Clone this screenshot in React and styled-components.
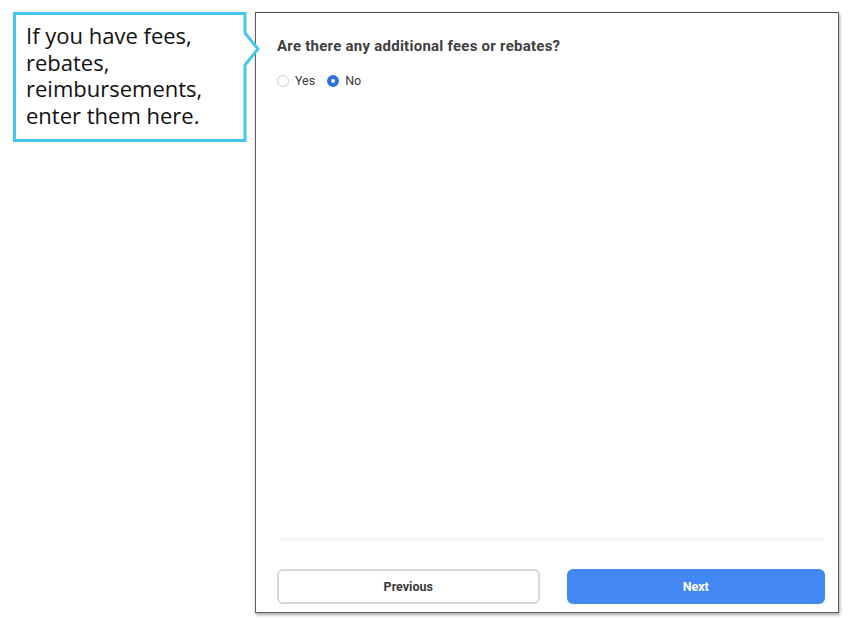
import styled, { createGlobalStyle } from "styled-components";

const GlobalStyle = createGlobalStyle`
    html, body {
        margin: 0;
        padding: 0;
        background: #ffffff;
    }
`

const Page = styled.div`
    position: relative;
    width: 849px;
    height: 624px;
    padding: 12px 0 0 255px;
    box-sizing: border-box;
`

const Panel = styled.div`
    width: 584px;
    height: 601px;
    box-sizing: border-box;
    border: 1px solid #5f5f5f;
    border-top-color: #4a4a4a;
    box-shadow: 1px 2px 3px rgba(0, 0, 0, 0.35);
    background: #ffffff;
    display: flex;
    flex-direction: column;
`

const Body = styled.div`
    flex: 1;
    padding: 24px 20px 0 21px;
`

const Question = styled.h2`
    margin: 0;
    font-family: 'Roboto', 'Liberation Sans', sans-serif;
    font-weight: 700;
    font-size: 15px;
    line-height: 18px;
    letter-spacing: 0.25px;
    color: #3f3f3f;
`

const Options = styled.div`
    display: flex;
    align-items: center;
    gap: 12px;
    margin-top: 18px;
`

const Option = styled.label`
    display: flex;
    align-items: center;
    gap: 6px;
    font-family: 'Roboto', 'Liberation Sans', sans-serif;
    font-size: 12.5px;
    color: #3a3a3a;
`

const Radio = styled.span`
    width: 12px;
    height: 12px;
    box-sizing: border-box;
    border-radius: 50%;
    border: ${p => p.checked ? '4px solid #2d6fe6' : '1px solid #c9cdd2'};
    background: #ffffff;
`

const Divider = styled.div`
    margin: 0 15px 0 24px;
    height: 4px;
    background: linear-gradient(to bottom, #f3f3f3, #fbfbfb);
`

const Footer = styled.div`
    display: flex;
    gap: 27px;
    padding: 27px 13px 8px 21px;
`

const Button = styled.button`
    flex: 1 1 0;
    min-width: 0;
    height: 35px;
    padding: 0;
    border-radius: 6px;
    box-sizing: border-box;
    font-family: 'Roboto', 'Liberation Sans', sans-serif;
    font-weight: 700;
    font-size: 12.5px;
    cursor: pointer;
    border: ${p => p.primary ? 'none' : '2px solid #d5d8dd'};
    background: ${p => p.primary ? '#4387f4' : '#ffffff'};
    color: ${p => p.primary ? '#ffffff' : '#3a3a3a'};
`

const Callout = styled.div`
    position: absolute;
    left: 12px;
    top: 11px;
    width: 250px;
    height: 133px;
`

const CalloutText = styled.p`
    position: absolute;
    left: 14px;
    top: 11px;
    margin: 0;
    font-family: 'Open Sans', 'Noto Sans', sans-serif;
    font-size: 22px;
    line-height: 26.5px;
    color: #111111;
`

function App() {
    return <>
        <GlobalStyle />
        <Page>
            <Panel>
                <Body>
                    <Question>Are there any additional fees or rebates?</Question>
                    <Options>
                        <Option><Radio />Yes</Option>
                        <Option><Radio checked />No</Option>
                    </Options>
                </Body>
                <Divider />
                <Footer>
                    <Button>Previous</Button>
                    <Button primary>Next</Button>
                </Footer>
            </Panel>
            <Callout>
                <svg width="250" height="133" viewBox="0 0 250 133">
                    <path
                        d="M2.5 2.5 H233 V22 L246 38 L233 54 V129.5 H2.5 Z"
                        fill="#ffffff"
                        stroke="#45c6f0"
                        strokeWidth="3"
                        strokeLinejoin="miter"
                    />
                </svg>
                <CalloutText>
                    If you have fees,<br />
                    rebates,<br />
                    reimbursements,<br />
                    enter them here.
                </CalloutText>
            </Callout>
        </Page>
    </>
}

export default App
